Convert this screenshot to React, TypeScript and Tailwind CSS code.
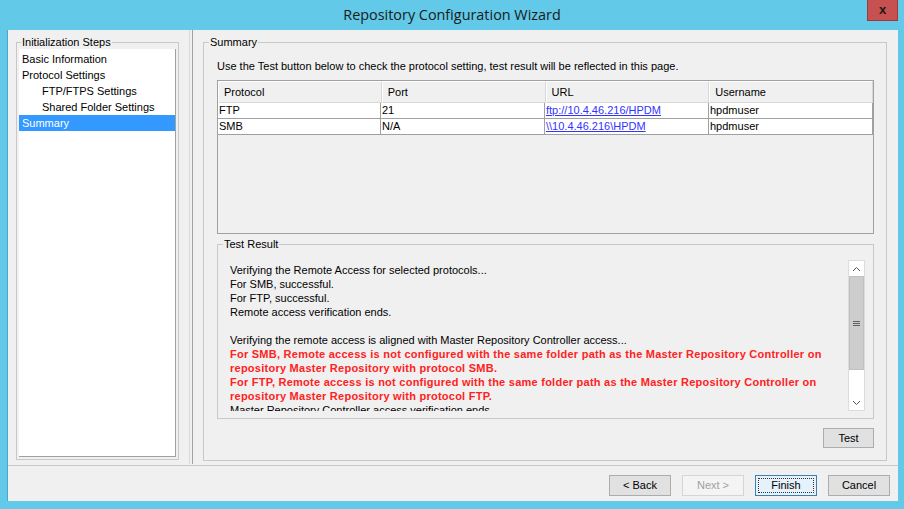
import React from "react";

const steps = [
  { label: "Basic Information", indent: false, active: false },
  { label: "Protocol Settings", indent: false, active: false },
  { label: "FTP/FTPS Settings", indent: true, active: false },
  { label: "Shared Folder Settings", indent: true, active: false },
  { label: "Summary", indent: false, active: true },
];

const rows = [
  { protocol: "FTP", port: "21", url: "ftp://10.4.46.216/HPDM", user: "hpdmuser" },
  { protocol: "SMB", port: "N/A", url: "\\\\10.4.46.216\\HPDM", user: "hpdmuser" },
];

const results: { text: string; red?: boolean }[] = [
  { text: "Verifying the Remote Access for selected protocols..." },
  { text: "For SMB, successful." },
  { text: "For FTP, successful." },
  { text: "Remote access verification ends." },
  { text: "\u00a0" },
  { text: "Verifying the remote access is aligned with Master Repository Controller access..." },
  { text: "For SMB, Remote access is not configured with the same folder path as the Master Repository Controller on", red: true },
  { text: "repository Master Repository with protocol SMB.", red: true },
  { text: "For FTP, Remote access is not configured with the same folder path as the Master Repository Controller on", red: true },
  { text: "repository Master Repository with protocol FTP.", red: true },
  { text: "Master Repository Controller access verification ends." },
];

const Button = ({ label, disabled, focused }: { label: string; disabled?: boolean; focused?: boolean }) => (
  <div
    className={
      "w-[62px] h-[21px] flex items-center justify-center border text-[11px] " +
      (disabled
        ? "border-[#d5d5d5] bg-[#f4f4f4] text-[#a0a0a0]"
        : focused
        ? "border-[#3c7fb1] bg-[#e5f1fb] text-black"
        : "border-[#adadad] bg-[#e1e1e1] text-black")
    }
  >
    {focused ? (
      <div className="w-[56px] h-[15px] border border-dotted border-[#333] flex items-center justify-center">{label}</div>
    ) : (
      label
    )}
  </div>
);

export default function App() {
  return (
    <div
      className="w-[904px] h-[509px] bg-[#62c9e8] flex flex-col overflow-hidden"
      style={{ fontFamily: '"Liberation Sans", Arial, sans-serif' }}
    >
      {/* Title bar */}
      <div className="h-[30px] flex items-start relative">
        <div
          className="flex-1 text-center pt-[4px] text-[14.4px] text-[#1a1a1a]"
          style={{ fontFamily: '"Open Sans", "Noto Sans", sans-serif' }}
        >
          Repository Configuration Wizard
        </div>
        <div className="absolute right-[6px] top-0 w-[31px] h-[21px] bg-[#c75050] border border-[#9c3b3b] border-t-0 flex items-center justify-center text-[13px] font-bold text-[#1a1a1a]">
          x
        </div>
      </div>

      {/* Client */}
      <div className="flex-1 ml-[7px] mr-[6px] mb-[8px] bg-[#f0f0f0] flex flex-col border-l border-[#4aa8c4]">
        <div className="flex-1 flex">
          {/* Left panel */}
          <div className="w-[182px] h-[434px] border-r border-[#d8d8d8] flex pl-[8px] pt-[12px]">
            <div className="relative w-[163px] h-[418px] border border-[#c8c8c8] pt-[6px] px-[2px] pb-[2px]">
              <span className="absolute -top-[7px] left-[4px] bg-[#f0f0f0] px-[1px] text-[11px] leading-[13px] text-black">
                Initialization Steps
              </span>
              <div className="w-full h-full bg-white border-r border-b border-[#a0a0a0] pt-[2px] text-[11px]">
                {steps.map((s) => (
                  <div
                    key={s.label}
                    className={
                      "h-[16px] leading-[16px] " +
                      (s.indent ? "pl-[23px] " : "pl-[3px] ") +
                      (s.active ? "bg-[#3399ff] text-white" : "text-black")
                    }
                  >
                    {s.label}
                  </div>
                ))}
              </div>
            </div>
          </div>

          {/* Right panel */}
          <div className="flex-1 h-[434px] border-l border-[#a0a0a0] ml-[2px] pl-[10px] pt-[12px]">
            <div className="relative w-[684px] h-[419px] border border-[#c8c8c8] pl-[13px] pr-[11px]">
              <span className="absolute -top-[7px] left-[5px] bg-[#f0f0f0] px-[1px] text-[11px] leading-[13px] text-black">
                Summary
              </span>
              <div className="pt-[16px] text-[11px] leading-[14px] text-black">
                Use the Test button below to check the protocol setting, test result will be reflected in this page.
              </div>

              {/* Table */}
              <div className="mt-[7px] w-[657px] h-[154px] border border-[#a0a0a0] bg-[#f0f0f0] text-[11px] text-black">
                <div className="flex h-[22px]">
                  {["Protocol", "Port", "URL", "Username"].map((h) => (
                    <div
                      key={h}
                      className="w-[164px] h-full flex items-center pl-[5px] border-r border-b border-[#d8d8d8] border-t border-l border-t-white border-l-white"
                    >
                      {h}
                    </div>
                  ))}
                </div>
                {rows.map((r) => (
                  <div key={r.protocol} className="flex h-[16px] w-[655px] bg-white border-b border-[#a0a0a0] leading-[15px]">
                    <div className="w-[163px] pl-[1px] border-r border-[#a0a0a0]">{r.protocol}</div>
                    <div className="w-[164px] pl-[1px] border-r border-[#a0a0a0]">{r.port}</div>
                    <div className="w-[164px] pl-[1px] border-r border-[#a0a0a0] text-[#3333ff] underline">{r.url}</div>
                    <div className="flex-1 pl-[1px] border-r border-[#a0a0a0]">{r.user}</div>
                  </div>
                ))}
              </div>

              {/* Test result */}
              <div className="relative mt-[10px] w-[657px] h-[175px] border border-[#c8c8c8] pl-[12px] pr-[8px] flex">
                <span className="absolute -top-[7px] left-[5px] bg-[#f0f0f0] px-[1px] text-[11px] leading-[13px] text-black">
                  Test Result
                </span>
                <div className="flex-1 h-[148px] mt-[18px] overflow-hidden text-[11px] leading-[14px]">
                  {results.map((l, i) => (
                    <div key={i} className={l.red ? "text-[#ff2222] font-bold tracking-[0.25px]" : "text-black"}>
                      {l.text}
                    </div>
                  ))}
                </div>
                <div className="w-[17px] h-[151px] mt-[15px] bg-[#f0f0f0] border border-[#dcdcdc] flex flex-col">
                  <div className="h-[15px] bg-white flex items-center justify-center">
                    <svg width="9" height="6" viewBox="0 0 9 6">
                      <path d="M1 5 L4.5 1.5 L8 5" fill="none" stroke="#555" strokeWidth="1" />
                    </svg>
                  </div>
                  <div className="h-[94px] bg-[#cdcdcd] border border-[#c0c0c0] flex items-center justify-center">
                    <svg width="7" height="7" viewBox="0 0 7 7">
                      <path d="M0 1.5 H7 M0 3.5 H7 M0 5.5 H7" stroke="#606060" strokeWidth="1" />
                    </svg>
                  </div>
                  <div className="flex-1 bg-white" />
                  <div className="h-[15px] bg-white flex items-center justify-center">
                    <svg width="9" height="6" viewBox="0 0 9 6">
                      <path d="M1 1 L4.5 4.5 L8 1" fill="none" stroke="#555" strokeWidth="1" />
                    </svg>
                  </div>
                </div>
              </div>

              <div className="flex justify-end mt-[9px] pr-[1px]">
                <div className="w-[51px] h-[20px] border border-[#adadad] bg-[#e1e1e1] flex items-center justify-center text-[11px] text-black">
                  Test
                </div>
              </div>
            </div>
          </div>
        </div>

        {/* Bottom bar */}
        <div className="h-[36px] border-t border-[#c8c8c8] flex items-center justify-end gap-[11px] pr-[8px] pt-[4px]">
          <Button label="< Back" />
          <Button label="Next >" disabled />
          <Button label="Finish" focused />
          <Button label="Cancel" />
        </div>
      </div>
    </div>
  );
}
